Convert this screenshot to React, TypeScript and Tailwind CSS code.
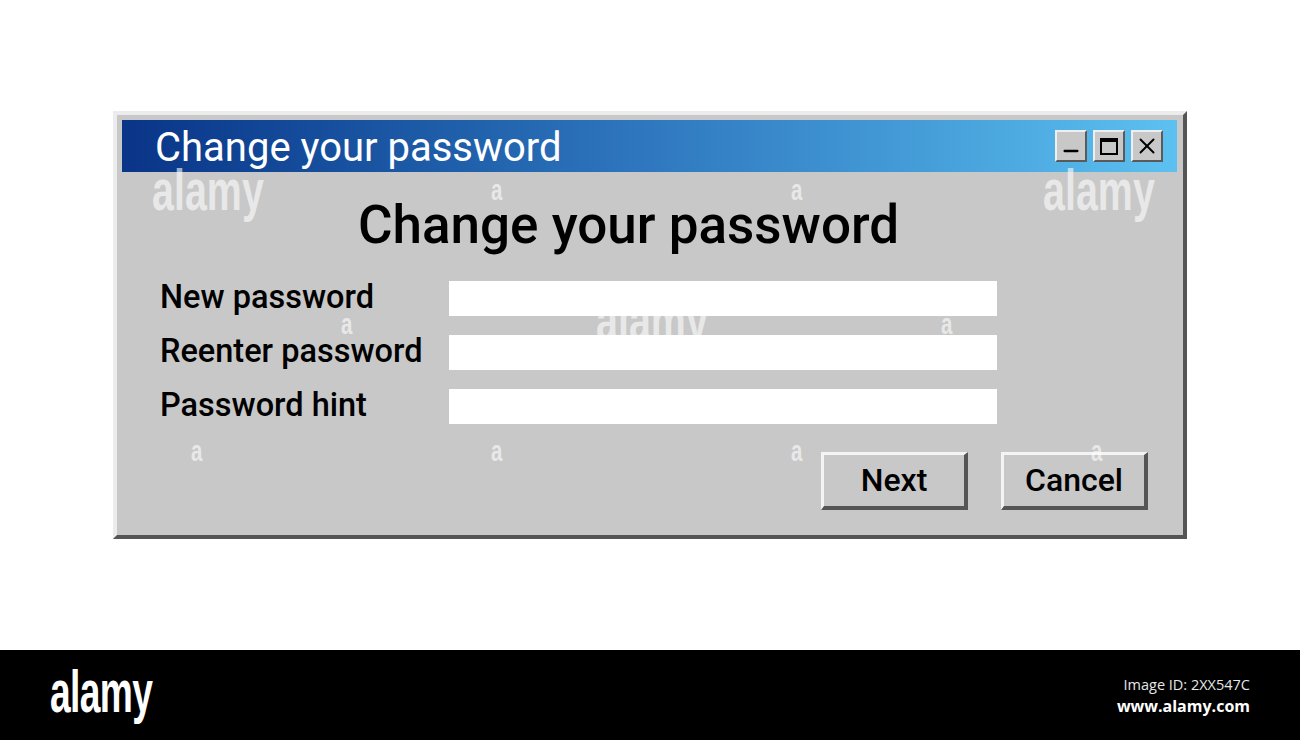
import { Minus, X } from "lucide-react"

const rows = ["New password", "Reenter password", "Password hint"]

// faint stock-photo watermark marks, laid over the picture
const marks = [
  { x: 152, y: 166, big: true },
  { x: 1043, y: 166, big: true },
  { x: 596, y: 296, big: true },
  { x: 491, y: 182, big: false },
  { x: 791, y: 182, big: false },
  { x: 341, y: 316, big: false },
  { x: 941, y: 316, big: false },
  { x: 191, y: 443, big: false },
  { x: 491, y: 443, big: false },
  { x: 791, y: 443, big: false },
  { x: 1091, y: 443, big: false },
]

function TitleButton({ children }: { children: React.ReactNode }) {
  return (
    <div className="w-[32px] h-[32px] bg-[#c8c8c8] border-t-2 border-l-2 border-t-[#efefef] border-l-[#efefef] border-b-2 border-r-2 border-b-[#5a5a5a] border-r-[#5a5a5a] flex items-center justify-center text-black">
      {children}
    </div>
  )
}

function DialogButton({ label }: { label: string }) {
  return (
    <button className="w-[147px] h-[58px] bg-[#c8c8c8] border-t-[3px] border-l-[3px] border-t-[#f4f4f4] border-l-[#f4f4f4] border-b-4 border-r-4 border-b-[#555] border-r-[#555] text-[32px] font-medium text-black flex items-center justify-center pb-[2px]">
      {label}
    </button>
  )
}

export default function App() {
  return (
    <div className="w-[1300px] h-[740px] flex flex-col bg-white" style={{ fontFamily: "Roboto, 'Liberation Sans', sans-serif" }}>
      <div className="relative h-[650px] pt-[111px] pl-[113px]">
        <div className="w-[1074px] h-[428px] bg-[#c8c8c8] border-t-4 border-l-4 border-t-[#ececec] border-l-[#ececec] border-b-4 border-r-4 border-b-[#555] border-r-[#555] pt-[5px] pl-[5px] pr-[6px] flex flex-col">
          <div className="h-[52px] bg-gradient-to-r from-[#0a3487] via-[#2f78bf] to-[#5cc1f0] flex items-center justify-between pl-[33px] pr-[14px]">
            <span className="text-white text-[40px] leading-none pt-[4px]">Change your password</span>
            <div className="flex gap-[6px]">
              <TitleButton>
                <Minus size={22} strokeWidth={2.5} className="mt-[10px]" />
              </TitleButton>
              <TitleButton>
                <div className="w-[18px] h-[17px] border-2 border-t-4 border-black" />
              </TitleButton>
              <TitleButton>
                <X size={26} strokeWidth={1.8} />
              </TitleButton>
            </div>
          </div>

          <h1 className="mt-[30px] h-[46px] leading-[46px] text-[53px] font-medium text-black text-center pr-[42px]">
            Change your password
          </h1>

          <div className="mt-[33px] flex flex-col gap-[19px] pl-[38px]">
            {rows.map((r) => (
              <div key={r} className="flex items-center h-[35px]">
                <span className="w-[289px] text-[32.5px] font-medium text-black leading-[30px] pb-[4px]">{r}</span>
                <div className="w-[548px] h-[35px] bg-white" />
              </div>
            ))}
          </div>

          <div className="mt-[28px] flex justify-end gap-[33px] pr-[29px]">
            <DialogButton label="Next" />
            <DialogButton label="Cancel" />
          </div>
        </div>

        {marks.map((m, i) => (
          <span
            key={i}
            className={`absolute text-white/60 font-bold origin-left scale-x-[0.68] ${m.big ? "text-[58px] leading-[48px]" : "text-[30px] leading-[16px]"}`}
            style={{ left: m.x, top: m.y, fontFamily: "'Liberation Sans', sans-serif" }}
          >
            {m.big ? "alamy" : "a"}
          </span>
        ))}
      </div>

      <div className="h-[90px] bg-black flex items-center justify-between pl-[50px] pr-[50px]">
        <span className="text-white font-bold text-[60px] leading-none origin-left scale-x-[0.62] tracking-[-1px] pb-[6px]" style={{ fontFamily: "'Liberation Sans', sans-serif" }}>
          alamy
        </span>
        <div className="flex flex-col items-end gap-[3px]" style={{ fontFamily: "'Open Sans', 'DejaVu Sans', sans-serif" }}>
          <span className="text-[#e6e6e6] text-[14.5px] leading-[18px]">Image ID: 2XX547C</span>
          <span className="text-white font-bold text-[16px] leading-[18px]">www.alamy.com</span>
        </div>
      </div>
    </div>
  )
}
